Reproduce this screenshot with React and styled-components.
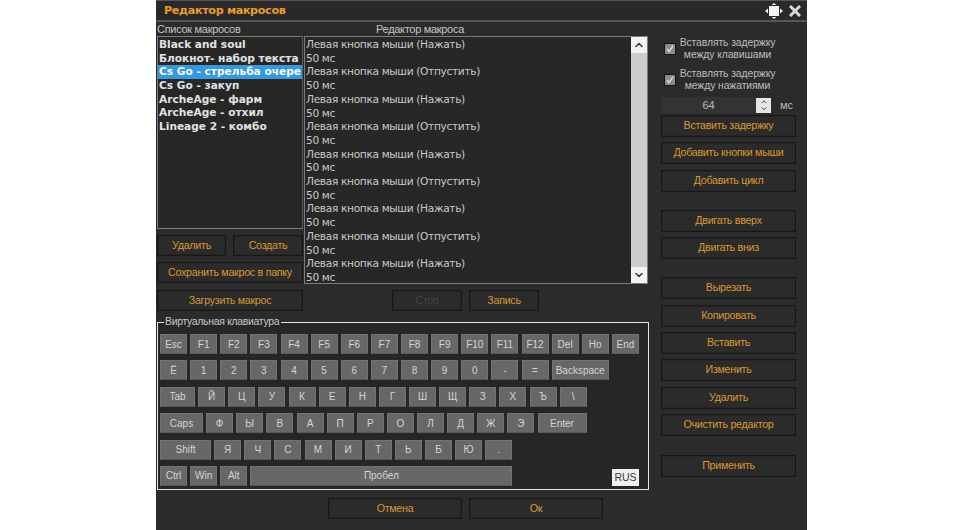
import React from 'react'
import styled, { createGlobalStyle } from 'styled-components'
import { ChevronUp, ChevronDown } from 'lucide-react'

const GlobalStyle = createGlobalStyle`
  html, body {
    margin: 0;
    background: #fff;
  }
  body {
    font-family: "DejaVu Sans", "Liberation Sans", sans-serif;
  }
`

const orange = '#da982e'
const uiFont = '"Liberation Sans", Arial, sans-serif'

const Page = styled.div`
  width: 960px;
  height: 530px;
  padding-left: 156px;
  box-sizing: border-box;
  overflow: hidden;
`
const Window = styled.div`
  width: 651px;
  height: 530px;
  background: #2b2b2b;
  border-top: 1px solid #555;
  box-sizing: border-box;
`
const TitleBar = styled.div`
  height: 21px;
  box-sizing: border-box;
  border-bottom: 2px solid #565656;
  display: flex;
  align-items: center;
  padding: 0 6px 0 8px;
  background: #292929;
`
const Title = styled.div`
  flex: 1;
  color: #eb9c26;
  font-size: 11.2px;
  font-weight: 700;
  font-family: "DejaVu Sans", sans-serif;
  letter-spacing: -0.35px;
`
const TitleIcons = styled.div`
  display: flex;
  align-items: center;
  gap: 6px;
`
const Content = styled.div`
  display: flex;
  height: 508px;
`
const LeftColumn = styled.div`
  width: 505px;
  padding-left: 1px;
  box-sizing: border-box;
`
const Captions = styled.div`
  display: flex;
  height: 14px;
  align-items: center;
  font-family: ${uiFont};
  font-size: 11px;
  letter-spacing: -0.3px;
  color: #c4c4c4;
`
const ListCaption = styled.div`
  width: 219px;
`
const TopArea = styled.div`
  display: flex;
  gap: 1px;
`
const Side = styled.div`
  width: 146px;
  display: flex;
  flex-direction: column;
`
const Panel = styled.div`
  background: #272727;
  border: 1px solid #7c7c7c;
  box-sizing: border-box;
  overflow: hidden;
`
const MacroList = styled(Panel)`
  height: 193px;
  padding-top: 1px;
  border-right-color: #555;
`
const MacroItem = styled.div`
  height: 13.7px;
  line-height: 13.7px;
  padding-left: 1px;
  font-size: 10.6px;
  font-weight: 700;
  white-space: nowrap;
  overflow: hidden;
  color: ${p => (p.$active ? '#f4f8fc' : '#e2e2e2')};
  background: ${p => (p.$active ? '#3399e0' : 'transparent')};
`
const Editor = styled(Panel)`
  width: 344px;
  height: 248px;
  display: flex;
`
const EditorLines = styled.div`
  flex: 1;
  overflow: hidden;
  padding-top: 1px;
`
const EditorLine = styled.div`
  height: 13.71px;
  line-height: 13.71px;
  padding-left: 1px;
  font-size: 10.6px;
  letter-spacing: -0.33px;
  white-space: nowrap;
  color: #cacaca;
`
const Scrollbar = styled.div`
  width: 16px;
  background: #cdcdcd;
  display: flex;
  flex-direction: column;
  justify-content: space-between;
`
const ScrollButton = styled.div`
  height: 16px;
  background: #f2f2f2;
  color: #333;
  display: flex;
  align-items: center;
  justify-content: center;
`
const Button = styled.button`
  display: block;
  width: ${p => p.$w || 135}px;
  height: ${p => p.$h || 22}px;
  padding: 0 0 2px;
  background: #2b2b2b;
  border: 1px solid #171717;
  border-radius: 0;
  box-shadow: inset 0 0 0 1px #252525;
  color: ${p => (p.disabled ? '#454545' : orange)};
  font-family: ${uiFont};
  font-size: 10.7px;
  letter-spacing: -0.28px;
  white-space: nowrap;
`
const ButtonRow = styled.div`
  display: flex;
  gap: ${p => p.$gap || 7}px;
`
const SideButtons = styled.div`
  display: flex;
  flex-direction: column;
  gap: 6px;
  margin-top: 6px;
`
const RecordRow = styled.div`
  display: flex;
  margin-top: 6px;
`
const RecordButtons = styled(ButtonRow)`
  margin-left: 89px;
`
const Fieldset = styled.fieldset`
  margin: 5px 0 0;
  padding: 0 0 3px 2px;
  width: 492px;
  height: 174px;
  box-sizing: border-box;
  border: 1px solid #e4e4e4;
  background: #262626;
`
const Legend = styled.legend`
  margin-left: 4px;
  padding: 0 2px 0 1px;
  font-family: ${uiFont};
  font-size: 10.4px;
  letter-spacing: -0.28px;
  line-height: 12px;
  color: #c8c8c8;
`
const Keyboard = styled.div`
  width: 479px;
  margin-top: 6px;
  display: flex;
  flex-direction: column;
  gap: 6.4px;
`
const KeyRow = styled.div`
  display: flex;
  gap: 3.14px;
  height: 20px;
`
const Key = styled.div`
  flex: none;
  width: ${p => p.$w || 27}px;
  height: 20px;
  box-sizing: border-box;
  background: #676767;
  border: 1px solid #737373;
  border-bottom-color: #595959;
  color: #d4d4d4;
  font-family: ${uiFont};
  font-size: 10px;
  display: flex;
  align-items: center;
  justify-content: center;
`
const LangKey = styled.div`
  margin: 3px 0 0 auto;
  width: 27px;
  height: 17px;
  background: #f0f0f0;
  color: #3a3a3a;
  font-family: ${uiFont};
  font-size: 10.5px;
  display: flex;
  align-items: center;
  justify-content: center;
`
const Footer = styled(ButtonRow)`
  margin: 8px 0 0 171px;
`
const RightColumn = styled.div`
  width: 135px;
  display: flex;
  flex-direction: column;
`
const CheckRow = styled.div`
  display: flex;
  align-items: center;
  height: ${p => p.$h}px;
  margin-left: 3px;
  margin-top: ${p => p.$top}px;
`
const CheckBox = styled.span`
  flex: none;
  width: 10px;
  height: 10px;
  background: #8d8d8d;
  border: 1px solid #141414;
  display: flex;
  align-items: center;
  justify-content: center;
`
const CheckLabel = styled.div`
  width: 105px;
  margin-left: -1px;
  text-align: center;
  font-family: ${uiFont};
  font-size: 10.4px;
  letter-spacing: -0.1px;
  line-height: 12px;
  color: #bdbdbd;
`
const SpinRow = styled.div`
  display: flex;
  align-items: center;
  height: 16px;
  margin: 5px 0 2px;
`
const SpinValue = styled.div`
  width: 95px;
  height: 16px;
  line-height: 16px;
  background: #333;
  text-align: center;
  color: #bcbcbc;
  font-family: ${uiFont};
  font-size: 11px;
`
const SpinButtons = styled.div`
  width: 15px;
  height: 15px;
  background: #e6e6e6;
  color: #333;
  display: flex;
  flex-direction: column;
  align-items: center;
  justify-content: center;
`
const Unit = styled.div`
  margin-left: 9px;
  color: #bdbdbd;
  font-family: ${uiFont};
  font-size: 11px;
`
const ActionGroup = styled.div`
  display: flex;
  flex-direction: column;
  gap: 5.4px;
  margin-top: ${p => p.$top}px;
`

const macros = [
  'Black and soul',
  'Блокнот- набор текста',
  'Cs Go - стрельба очере',
  'Cs Go - закуп',
  'ArcheAge - фарм',
  'ArcheAge - отхил',
  'Lineage 2 - комбо'
]

const editorLines = Array.from({ length: 18 }, (_, i) => {
  if (i % 2) return '50 мс'
  return i % 4 === 0 ? 'Левая кнопка мыши (Нажать)' : 'Левая кнопка мыши (Отпустить)'
})

const keyRows = [
  [['Esc'], ['F1'], ['F2'], ['F3'], ['F4'], ['F5'], ['F6'], ['F7'], ['F8'], ['F9'], ['F10'], ['F11'], ['F12'], ['Del'], ['Ho'], ['End']],
  [['Ё'], ['1'], ['2'], ['3'], ['4'], ['5'], ['6'], ['7'], ['8'], ['9'], ['0'], ['-'], ['='], ['Backspace', 57]],
  [['Tab', 35], ['Й'], ['Ц'], ['У'], ['К'], ['Е'], ['Н'], ['Г'], ['Ш'], ['Щ'], ['З'], ['Х'], ['Ъ'], ['\\']],
  [['Caps', 43], ['Ф'], ['Ы'], ['В'], ['А'], ['П'], ['Р'], ['О'], ['Л'], ['Д'], ['Ж'], ['Э'], ['Enter', 49]],
  [['Shift', 51], ['Я'], ['Ч'], ['С'], ['М'], ['И'], ['Т'], ['Ь'], ['Б'], ['Ю'], ['.']],
  [['Ctrl'], ['Win'], ['Alt'], ['Пробел', 262]]
]

const MoveIcon = () => (
  <svg width="18" height="16" viewBox="0 0 18 16" fill="#f4f4f4">
    <rect x="4" y="3" width="10" height="10" />
    <path d="M9 0l2.4 2H6.6zM9 16l-2.4-2h4.8zM0 8l3-2.5v5zM18 8l-3 2.5v-5z" />
  </svg>
)

const CloseIcon = () => (
  <svg width="12" height="12" viewBox="0 0 12 12" stroke="#d8d8d8" strokeWidth="3">
    <path d="M1 1l10 10M11 1L1 11" />
  </svg>
)

const Check = () => (
  <svg width="8" height="8" viewBox="0 0 8 8" fill="none" stroke="#d6d6d6" strokeWidth="1.6">
    <path d="M1 4l2 2.4L7 1" />
  </svg>
)

const App = () => (
  <Page>
    <GlobalStyle />
    <Window>
      <TitleBar>
        <Title>Редактор макросов</Title>
        <TitleIcons>
          <MoveIcon />
          <CloseIcon />
        </TitleIcons>
      </TitleBar>
      <Content>
        <LeftColumn>
          <Captions>
            <ListCaption>Список макросов</ListCaption>
            <div>Редактор макроса</div>
          </Captions>
          <TopArea>
            <Side>
              <MacroList>
                {macros.map((name, i) => (
                  <MacroItem key={name} $active={i === 2}>{name}</MacroItem>
                ))}
              </MacroList>
              <SideButtons>
                <ButtonRow>
                  <Button $w={69} $h={21}>Удалить</Button>
                  <Button $w={70} $h={21}>Создать</Button>
                </ButtonRow>
                <Button $w={146} $h={21}>Сохранить макрос в папку</Button>
              </SideButtons>
            </Side>
            <Editor>
              <EditorLines>
                {editorLines.map((line, i) => (
                  <EditorLine key={i}>{line}</EditorLine>
                ))}
              </EditorLines>
              <Scrollbar>
                <ScrollButton><ChevronUp size={12} strokeWidth={3} /></ScrollButton>
                <ScrollButton><ChevronDown size={12} strokeWidth={3} /></ScrollButton>
              </Scrollbar>
            </Editor>
          </TopArea>
          <RecordRow>
            <Button $w={146} $h={21}>Загрузить макрос</Button>
            <RecordButtons>
              <Button $w={70} $h={21} disabled>Стоп</Button>
              <Button $w={70} $h={21}>Запись</Button>
            </RecordButtons>
          </RecordRow>
          <Fieldset>
            <Legend>Виртуальная клавиатура</Legend>
            <Keyboard>
              {keyRows.map((row, i) => (
                <KeyRow key={i}>
                  {row.map(([label, width]) => (
                    <Key key={label} $w={width}>{label}</Key>
                  ))}
                  {i === 5 && <LangKey>RUS</LangKey>}
                </KeyRow>
              ))}
            </Keyboard>
          </Fieldset>
          <Footer>
            <Button $w={134} $h={21}>Отмена</Button>
            <Button $w={134} $h={21}>Ок</Button>
          </Footer>
        </LeftColumn>
        <RightColumn>
          <CheckRow $h={24} $top={15}>
            <CheckBox><Check /></CheckBox>
            <CheckLabel>Вставлять задержку<br />между клавишами</CheckLabel>
          </CheckRow>
          <CheckRow $h={24} $top={7}>
            <CheckBox><Check /></CheckBox>
            <CheckLabel>Вставлять задержку<br />между нажатиями</CheckLabel>
          </CheckRow>
          <SpinRow>
            <SpinValue>64</SpinValue>
            <SpinButtons>
              <ChevronUp size={8} strokeWidth={3} />
              <ChevronDown size={8} strokeWidth={3} />
            </SpinButtons>
            <Unit>мс</Unit>
          </SpinRow>
          <ActionGroup $top={0}>
            <Button>Вставить задержку</Button>
            <Button>Добавить кнопки мыши</Button>
            <Button>Добавить цикл</Button>
          </ActionGroup>
          <ActionGroup $top={18}>
            <Button>Двигать вверх</Button>
            <Button>Двигать вниз</Button>
          </ActionGroup>
          <ActionGroup $top={18}>
            <Button>Вырезать</Button>
            <Button>Копировать</Button>
            <Button>Вставить</Button>
            <Button>Изменить</Button>
            <Button>Удалить</Button>
            <Button>Очистить редактор</Button>
          </ActionGroup>
          <ActionGroup $top={19}>
            <Button>Применить</Button>
          </ActionGroup>
        </RightColumn>
      </Content>
    </Window>
  </Page>
)

export default App
